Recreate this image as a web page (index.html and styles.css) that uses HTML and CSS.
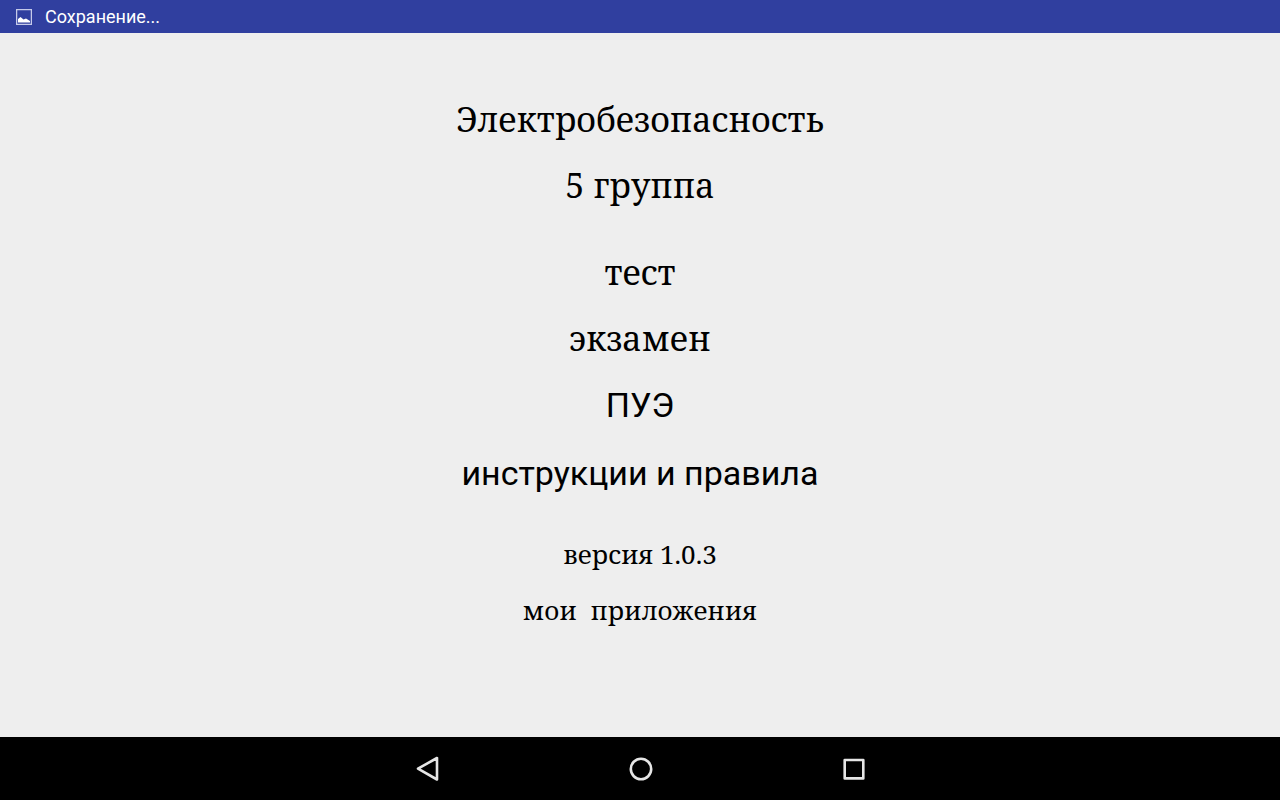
FILE: index.html
```html
<!DOCTYPE html>
<html lang="ru">
<head>
  <meta charset="UTF-8">
  <meta name="viewport" content="width=device-width, initial-scale=1.0">
  <title>Электробезопасность</title>
  <link rel="stylesheet" href="styles.css">
</head>
<body>
  <header class="status-bar">
    <svg class="status-icon" width="16" height="16" viewBox="0 0 16 16" aria-hidden="true">
      <rect x="0.6" y="0.6" width="14.8" height="14.8" fill="none" stroke="#c5cae9" stroke-width="1.3"/>
      <path d="M2 13.5V10L4.5 8L7.5 10.5L10 9.5L14 12V13.5Z" fill="#fff"/>
    </svg>
    <span>Сохранение...</span>
  </header>

  <main class="content">
    <h1 class="title">Электробезопасность</h1>
    <p class="title">5 группа</p>

    <nav class="menu">
      <a class="menu-link" href="#test">тест</a>
      <a class="menu-link" href="#exam">экзамен</a>
      <a class="menu-link menu-link-sans" href="#pue">ПУЭ</a>
      <a class="menu-link menu-link-sans" href="#rules">инструкции и правила</a>
    </nav>

    <div class="about">
      <p class="about-line">версия 1.0.3</p>
      <a class="about-line" href="#apps">мои&nbsp; приложения</a>
    </div>
  </main>

  <footer class="nav-bar">
    <button class="nav-button" type="button" aria-label="Назад">
      <svg width="32" height="32" viewBox="0 0 32 32"><path d="M25 5V26.5L6 15.7Z"/></svg>
    </button>
    <button class="nav-button" type="button" aria-label="Домой">
      <svg width="32" height="32" viewBox="0 0 32 32"><circle cx="16" cy="16" r="10.2"/></svg>
    </button>
    <button class="nav-button" type="button" aria-label="Обзор">
      <svg width="32" height="32" viewBox="0 0 32 32"><rect x="6.7" y="7" width="18.6" height="18.4"/></svg>
    </button>
  </footer>
</body>
</html>
```

FILE: styles.css
```css
* {
  box-sizing: border-box;
  margin: 0;
  padding: 0;
}

body {
  display: flex;
  flex-direction: column;
  min-height: 100vh;
  background: #eee;
  color: #000;
  font-family: "Noto Serif", "Droid Serif", "Liberation Serif", serif;
}

/* Status bar */
.status-bar {
  display: flex;
  align-items: center;
  gap: 13px;
  height: 33px;
  padding: 0 16px;
  background: #303f9f;
  color: #fff;
  font-family: Roboto, sans-serif;
  font-size: 18px;
}

/* Content */
.content {
  flex: 1;
  display: flex;
  flex-direction: column;
  align-items: center;
  padding-top: 53px;
  text-align: center;
}

.title,
.menu-link {
  font-size: 34px;
  font-weight: normal;
  line-height: 66px;
}

.menu,
.about {
  display: flex;
  flex-direction: column;
  align-items: center;
}

.menu {
  margin-top: 21px;
}

.menu-link,
.about-line {
  color: inherit;
  text-decoration: none;
}

.menu-link-sans {
  font-family: Roboto, sans-serif;
  line-height: 68px;
}

.about {
  margin-top: 19px;
}

.about-line {
  font-size: 26px;
  line-height: 56px;
}

/* Navigation bar */
.nav-bar {
  display: flex;
  justify-content: center;
  align-items: center;
  height: 63px;
  padding-left: 2px;
  background: #000;
}

.nav-button {
  display: flex;
  justify-content: center;
  width: 213px;
  border: none;
  background: none;
  cursor: pointer;
}

.nav-button svg {
  fill: none;
  stroke: #e6e6e6;
  stroke-width: 2.6;
  stroke-linejoin: round;
}
```
